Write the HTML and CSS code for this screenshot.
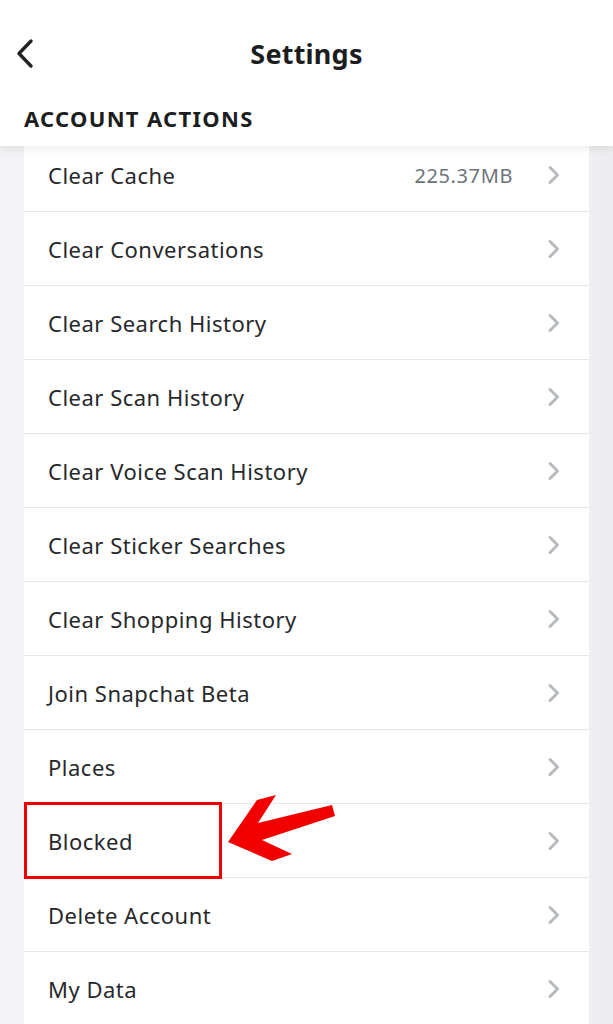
FILE: index.html
```html
<!DOCTYPE html>
<html>
<head>
<meta charset="utf-8">
<link rel="stylesheet" href="styles.css">
</head>
<body>
<header class="header">
  <div class="topbar">
    <svg class="back" width="20" height="32" viewBox="0 0 20 32"><path d="M15 3 L3 15.5 L15 28" fill="none" stroke="#222" stroke-width="3.4" stroke-linecap="round" stroke-linejoin="round"/></svg>
    <h1 class="title">Settings</h1>
  </div>
  <div class="section">ACCOUNT ACTIONS</div>
</header>
<main class="page">
  <ul class="card">
    <li class="row"><span class="label">Clear Cache</span><span class="value">225.37MB</span><svg class="chev" width="14" height="20" viewBox="0 0 14 20"><path d="M3 2.5 L10.5 10 L3 17.5" fill="none" stroke="#b7babe" stroke-width="3" stroke-linecap="round" stroke-linejoin="round"/></svg></li>
    <li class="row"><span class="label">Clear Conversations</span><svg class="chev" width="14" height="20" viewBox="0 0 14 20"><path d="M3 2.5 L10.5 10 L3 17.5" fill="none" stroke="#b7babe" stroke-width="3" stroke-linecap="round" stroke-linejoin="round"/></svg></li>
    <li class="row"><span class="label">Clear Search History</span><svg class="chev" width="14" height="20" viewBox="0 0 14 20"><path d="M3 2.5 L10.5 10 L3 17.5" fill="none" stroke="#b7babe" stroke-width="3" stroke-linecap="round" stroke-linejoin="round"/></svg></li>
    <li class="row"><span class="label">Clear Scan History</span><svg class="chev" width="14" height="20" viewBox="0 0 14 20"><path d="M3 2.5 L10.5 10 L3 17.5" fill="none" stroke="#b7babe" stroke-width="3" stroke-linecap="round" stroke-linejoin="round"/></svg></li>
    <li class="row"><span class="label">Clear Voice Scan History</span><svg class="chev" width="14" height="20" viewBox="0 0 14 20"><path d="M3 2.5 L10.5 10 L3 17.5" fill="none" stroke="#b7babe" stroke-width="3" stroke-linecap="round" stroke-linejoin="round"/></svg></li>
    <li class="row"><span class="label">Clear Sticker Searches</span><svg class="chev" width="14" height="20" viewBox="0 0 14 20"><path d="M3 2.5 L10.5 10 L3 17.5" fill="none" stroke="#b7babe" stroke-width="3" stroke-linecap="round" stroke-linejoin="round"/></svg></li>
    <li class="row"><span class="label">Clear Shopping History</span><svg class="chev" width="14" height="20" viewBox="0 0 14 20"><path d="M3 2.5 L10.5 10 L3 17.5" fill="none" stroke="#b7babe" stroke-width="3" stroke-linecap="round" stroke-linejoin="round"/></svg></li>
    <li class="row"><span class="label">Join Snapchat Beta</span><svg class="chev" width="14" height="20" viewBox="0 0 14 20"><path d="M3 2.5 L10.5 10 L3 17.5" fill="none" stroke="#b7babe" stroke-width="3" stroke-linecap="round" stroke-linejoin="round"/></svg></li>
    <li class="row"><span class="label">Places</span><svg class="chev" width="14" height="20" viewBox="0 0 14 20"><path d="M3 2.5 L10.5 10 L3 17.5" fill="none" stroke="#b7babe" stroke-width="3" stroke-linecap="round" stroke-linejoin="round"/></svg></li>
    <li class="row row-marked"><span class="label">Blocked</span><svg class="chev" width="14" height="20" viewBox="0 0 14 20"><path d="M3 2.5 L10.5 10 L3 17.5" fill="none" stroke="#b7babe" stroke-width="3" stroke-linecap="round" stroke-linejoin="round"/></svg>
      <span class="highlight"></span>
      <svg class="arrow" width="110" height="70" viewBox="0 0 110 70"><polygon points="1,47 30,5 49,0 31,28 105,10 108,21 35,45 65,59 45,66" fill="#f20000"/></svg>
    </li>
    <li class="row"><span class="label">Delete Account</span><svg class="chev" width="14" height="20" viewBox="0 0 14 20"><path d="M3 2.5 L10.5 10 L3 17.5" fill="none" stroke="#b7babe" stroke-width="3" stroke-linecap="round" stroke-linejoin="round"/></svg></li>
    <li class="row"><span class="label">My Data</span><svg class="chev" width="14" height="20" viewBox="0 0 14 20"><path d="M3 2.5 L10.5 10 L3 17.5" fill="none" stroke="#b7babe" stroke-width="3" stroke-linecap="round" stroke-linejoin="round"/></svg></li>
  </ul>
</main>
</body>
</html>
```
FILE: styles.css
```css
* { box-sizing: border-box; }
html, body {
  margin: 0;
  padding: 0;
  height: 1024px;
  overflow: hidden;
  background: linear-gradient(90deg, #f3f3f5 0%, #f4f4f6 90%, #ececee 100%);
  font-family: "Noto Sans", "Open Sans", sans-serif;
  color: #222326;
}
.header {
  position: relative;
  z-index: 2;
  height: 146px;
  background: #fff;
  box-shadow: 0 3px 8px rgba(0,0,0,0.08);
}
.topbar {
  height: 108px;
  display: flex;
  align-items: center;
  justify-content: center;
  position: relative;
}
.back {
  position: absolute;
  left: 16px;
  top: 38px;
}
.title {
  margin: 0;
  font-size: 27px;
  font-weight: 700;
  letter-spacing: 0.2px;
  color: #1c1d20;
  transform: translateY(-1px);
}
.section {
  padding-left: 24px;
  font-size: 22px;
  font-weight: 700;
  line-height: 20px;
  letter-spacing: 1.3px;
  color: #1c1d20;
  margin-top: 0;
}
.page {
  margin-top: -8px;
  padding: 0 24px;
}
.card {
  list-style: none;
  margin: 0;
  padding: 0;
  background: #fff;
}
.row {
  position: relative;
  height: 74px;
  display: flex;
  align-items: center;
  padding: 0 28px 0 24px;
  border-bottom: 1px solid #e7e7e9;
}
.label {
  flex: 1;
  font-size: 22px;
  letter-spacing: 0.5px;
  color: #27282b;
  padding-top: 1px;
}
.value {
  font-size: 20px;
  letter-spacing: 0.6px;
  color: #6e737b;
  margin-right: 34px;
  padding-top: 1px;
}
.chev { flex: none; }
.highlight {
  position: absolute;
  left: 0;
  top: -2px;
  width: 198px;
  height: 77px;
  border: 3px solid #f20000;
}
.arrow {
  position: absolute;
  left: 203px;
  top: -9px;
}
```
